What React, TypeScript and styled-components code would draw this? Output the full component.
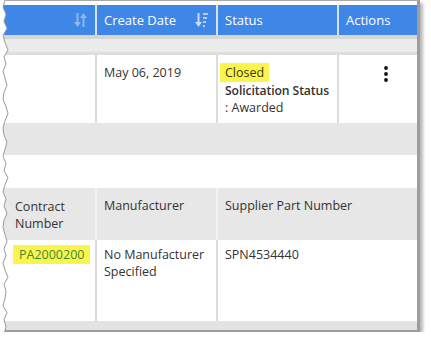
import React from "react";
import styled, { createGlobalStyle } from "styled-components";

const Global = createGlobalStyle`
  html, body { margin: 0; padding: 0; background: #ffffff; }
  body { font-family: "Open Sans", "Noto Sans", sans-serif; }
`;

const Frame = styled.div`
  position: relative;
  width: 417px;
  padding-top: 4px;
  background: #ffffff;
  border-top: 1px solid #a9a9a9;
  border-right: 3px solid #9d9d9d;
  border-bottom: 2px solid #9d9d9d;
  box-shadow: 3px 3px 3px rgba(0, 0, 0, 0.28);
  font-size: 12.5px;
  color: #333333;
`;

const Row = styled.div<{ $bg?: string; $h: number }>`
  display: flex;
  height: ${(p) => p.$h}px;
  background: ${(p) => p.$bg || "#ffffff"};
`;

const HeadRow = styled.div`
  display: flex;
  height: 30px;
  background: #3f87e6;
  color: #ffffff;
`;

const HeadCell = styled.div<{ $w: number; $last?: boolean }>`
  box-sizing: border-box;
  width: ${(p) => p.$w}px;
  border-right: ${(p) => (p.$last ? "none" : "2px solid #d6e3f5")};
  padding: 0 8px 0 7px;
  display: flex;
  align-items: center;
  justify-content: space-between;
  font-size: 13px;
`;

const FilterBand = styled.div`
  height: 13px;
  background: #ececec;
  border-top: 4px solid #d6d6d6;
  border-bottom: 3px solid #dedede;
`;

const Cell = styled.div<{ $w: number; $last?: boolean; $pl?: number; $pt?: number; $sep?: string }>`
  box-sizing: border-box;
  width: ${(p) => p.$w}px;
  border-right: ${(p) => (p.$last ? "none" : `2px solid ${p.$sep || "#dcdcdc"}`)};
  padding: ${(p) => p.$pt ?? 8}px 0 0 ${(p) => p.$pl ?? 7}px;
  line-height: 17px;
`;

const Highlight = styled.span<{ $color: string; $ml: number; $pad: number }>`
  display: inline-block;
  background: #fbf44c;
  color: ${(p) => p.$color};
  margin-left: ${(p) => p.$ml}px;
  padding: 1px ${(p) => p.$pad}px 1px ${(p) => p.$pad}px;
  line-height: 17px;
`;

const Strong = styled.div`
  font-weight: 600;
  color: #333333;
  white-space: nowrap;
  font-size: 12.2px;
  letter-spacing: -0.1px;
`;

const Band = styled.div<{ $bg: string; $h: number }>`
  height: ${(p) => p.$h}px;
  background: ${(p) => p.$bg};
`;

const DotsWrap = styled.div`
  padding: 11px 0 0 44px;
`;

const Tear = styled.svg`
  position: absolute;
  left: 0;
  top: -1px;
  width: 14px;
  height: 334px;
`;

function tearPath(): { fill: string; line: string } {
  const xs = [5, 3, 6, 4, 7, 3, 5, 8, 4, 6, 3, 5, 7, 4, 3, 6, 8, 5, 3, 4, 7, 5, 3, 6, 4, 8, 5, 3, 6, 4, 7, 4, 3, 5, 7, 4, 6, 3, 5, 8, 4, 6, 5, 3, 7, 4, 6, 4];
  const step = 334 / (xs.length - 1);
  const pts = xs.map((x, i) => `${x},${(i * step).toFixed(1)}`);
  const line = "M" + pts.join(" L");
  const fill = `M0,0 L${pts.join(" L")} L0,334 Z`;
  return { fill, line };
}

const SortBoth = () => (
  <svg width="13" height="16" viewBox="0 0 13 16">
    <g stroke="#8db7ef" strokeWidth="2" fill="none">
      <line x1="3.5" y1="1" x2="3.5" y2="12" />
      <line x1="9.5" y1="4" x2="9.5" y2="15" />
    </g>
    <polygon points="0,10 7,10 3.5,15" fill="#8db7ef" />
    <polygon points="6,6 13,6 9.5,1" fill="#8db7ef" />
  </svg>
);

const SortDesc = () => (
  <svg width="13" height="16" viewBox="0 0 13 16">
    <line x1="3.5" y1="1" x2="3.5" y2="12" stroke="#c9dcf6" strokeWidth="2" />
    <polygon points="0,10 7,10 3.5,15" fill="#c9dcf6" />
    <g fill="#b4cdf2">
      <rect x="8" y="1" width="5" height="2" />
      <rect x="8" y="5" width="4" height="2" />
      <rect x="8" y="9" width="3" height="2" />
      <rect x="8" y="13" width="2" height="2" />
    </g>
  </svg>
);

const Dots = () => (
  <svg width="6" height="16" viewBox="0 0 6 16">
    <circle cx="3" cy="2" r="1.9" fill="#111" />
    <circle cx="3" cy="8" r="1.9" fill="#111" />
    <circle cx="3" cy="14" r="1.9" fill="#111" />
  </svg>
);

const W = [97, 121, 121, 78];

export default function App() {
  const t = tearPath();
  return (
    <>
      <Global />
      <Frame>
        <HeadRow>
          <HeadCell $w={W[0]}>
            <span />
            <SortBoth />
          </HeadCell>
          <HeadCell $w={W[1]}>
            <span>Create Date</span>
            <SortDesc />
          </HeadCell>
          <HeadCell $w={W[2]}>
            <span>Status</span>
          </HeadCell>
          <HeadCell $w={W[3]} $last>
            <span>Actions</span>
          </HeadCell>
        </HeadRow>
        <FilterBand />
        <Row $h={68}>
          <Cell $w={W[0]} />
          <Cell $w={W[1]} $pt={9}>May 06, 2019</Cell>
          <Cell $w={W[2]}>
            <Highlight $color="#3d3a12" $ml={-5} $pad={5}>Closed</Highlight>
            <Strong>Solicitation Status</Strong>
            <div>: Awarded</div>
          </Cell>
          <Cell $w={W[3]} $last $pl={0} $pt={0}>
            <DotsWrap>
              <Dots />
            </DotsWrap>
          </Cell>
        </Row>
        <Band $bg="#e6e6e6" $h={32} />
        <Band $bg="#ffffff" $h={33} />
        <Row $h={52} $bg="#e7e7e7">
          <Cell $w={W[0]} $pl={15} $pt={10} $sep="#f2f2f2">Contract<br />Number</Cell>
          <Cell $w={W[1]} $pt={9} $sep="#f2f2f2">Manufacturer</Cell>
          <Cell $w={W[2] + W[3]} $pt={9} $last>Supplier Part Number</Cell>
        </Row>
        <Row $h={81}>
          <Cell $w={W[0]} $pl={15} $pt={5}>
            <Highlight $color="#3a8a3c" $ml={-2} $pad={6}>PA2000200</Highlight>
          </Cell>
          <Cell $w={W[1]} $pt={6}>No Manufacturer<br />Specified</Cell>
          <Cell $w={W[2] + W[3]} $pt={6} $last>SPN4534440</Cell>
        </Row>
        <Band $bg="#e3e3e3" $h={9} />
        <Tear viewBox="0 0 14 334" preserveAspectRatio="none">
          <path d={t.fill} fill="#ffffff" />
          <path d={t.line} fill="none" stroke="#9a9a9a" strokeWidth="1" />
        </Tear>
      </Frame>
    </>
  );
}
